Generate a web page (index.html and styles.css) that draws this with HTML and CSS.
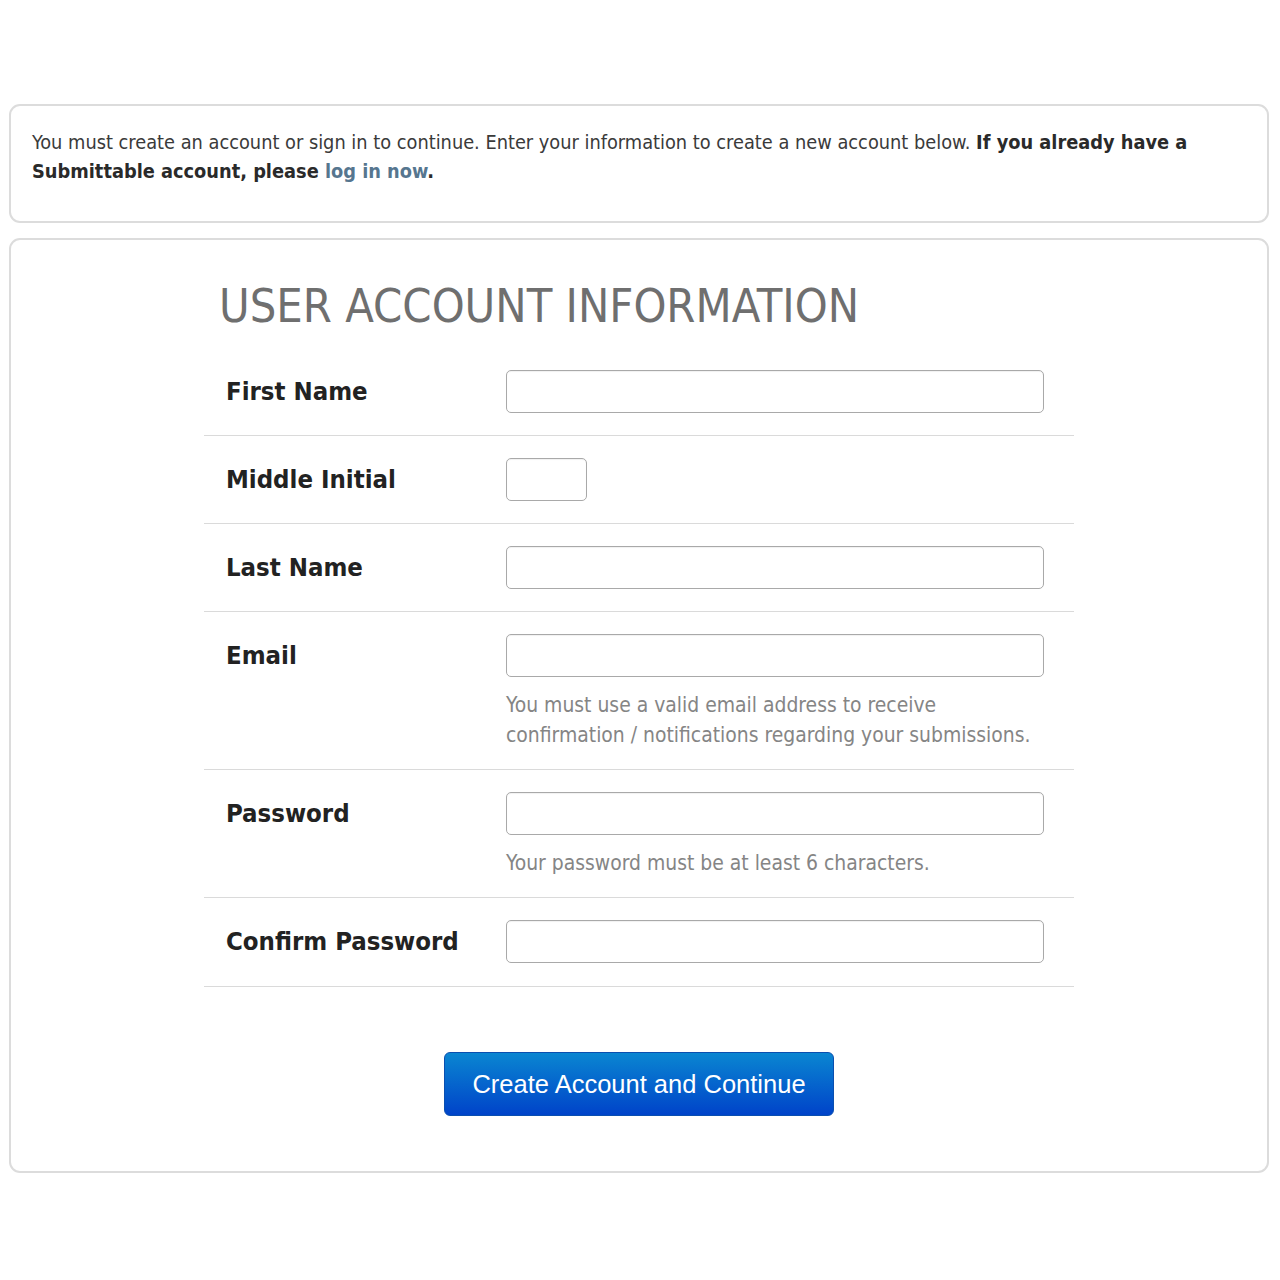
FILE: index.html
```html
<!DOCTYPE html>
<html>
<head>
<meta charset="utf-8">
<link rel="stylesheet" href="styles.css">
</head>
<body>
<div class="page">
  <div class="box notice">
    <p>You must create an account or sign in to continue. Enter your information to create a new account below. <strong>If you already have a Submittable account, please <a href="#">log in now</a>.</strong></p>
  </div>
  <div class="box formbox">
    <div class="form">
      <h1 class="title">USER ACCOUNT INFORMATION</h1>
      <div class="row">
        <label class="label">First Name</label>
        <div class="field"><input class="input" type="text"></div>
      </div>
      <div class="row">
        <label class="label">Middle Initial</label>
        <div class="field"><input class="input small" type="text"></div>
      </div>
      <div class="row">
        <label class="label">Last Name</label>
        <div class="field"><input class="input" type="text"></div>
      </div>
      <div class="row">
        <label class="label">Email</label>
        <div class="field"><input class="input" type="text">
          <p class="help">You must use a valid email address to receive<br>confirmation / notifications regarding your submissions.</p>
        </div>
      </div>
      <div class="row">
        <label class="label">Password</label>
        <div class="field"><input class="input" type="password">
          <p class="help">Your password must be at least 6 characters.</p>
        </div>
      </div>
      <div class="row last">
        <label class="label">Confirm Password</label>
        <div class="field"><input class="input" type="password"></div>
      </div>
      <div class="actions">
        <button class="btn" type="button">Create Account and Continue</button>
      </div>
    </div>
  </div>
</div>
</body>
</html>
```
FILE: styles.css
```css
html, body { margin: 0; padding: 0; background: #fff; }
body { font-family: "DejaVu Sans Condensed", "DejaVu Sans", sans-serif; color: #333; }
.page { padding: 104px 11px 0 9px; display: flex; flex-direction: column; gap: 15px; }
.box { border: 2px solid #dcdcdc; border-radius: 11px; background: #fff; }
.notice { padding: 22px 22px 35px 21px; }
.notice p { margin: 0; font-size: 19.8px; line-height: 29px; color: #3a3a3a; }
.notice strong { color: #2a2a2a; }
.notice a { color: #56768f; text-decoration: none; }
.formbox { padding: 0 0 55px 0; }
.form { width: 870px; margin: 0 auto; }
.title { margin: 38px 0 14px 15px; font-weight: normal; font-size: 46.6px; line-height: 56px; color: #6f6f6f; }
.row { display: flex; padding: 22px 0 22px 22px; border-bottom: 1px solid #dadada; }
.row.last { padding-bottom: 23px; }
.label { width: 280px; flex: none; font-weight: bold; font-size: 25.5px; line-height: 43px; color: #222; }
.field { flex: 1; }
.input { display: block; box-sizing: border-box; width: 538px; height: 43px; margin: 0; border: 1px solid #a9a9a9; border-radius: 5px; background: #fff; box-shadow: inset 0 1px 1px rgba(0,0,0,0.06); font-size: 18px; padding: 0 8px; }
.input.small { width: 81px; }
.help { margin: 13px 0 -3px 0; font-size: 20.9px; line-height: 30px; color: #858585; }
.actions { display: flex; justify-content: center; padding-top: 65px; }
.btn { width: 390px; height: 64px; border: 1px solid #0a4fb0; border-radius: 6px; background: linear-gradient(#0a86d1, #0043c9); color: #fff; font-family: "Liberation Sans", Arial, sans-serif; font-size: 25.5px; padding: 0; cursor: pointer; }
```
